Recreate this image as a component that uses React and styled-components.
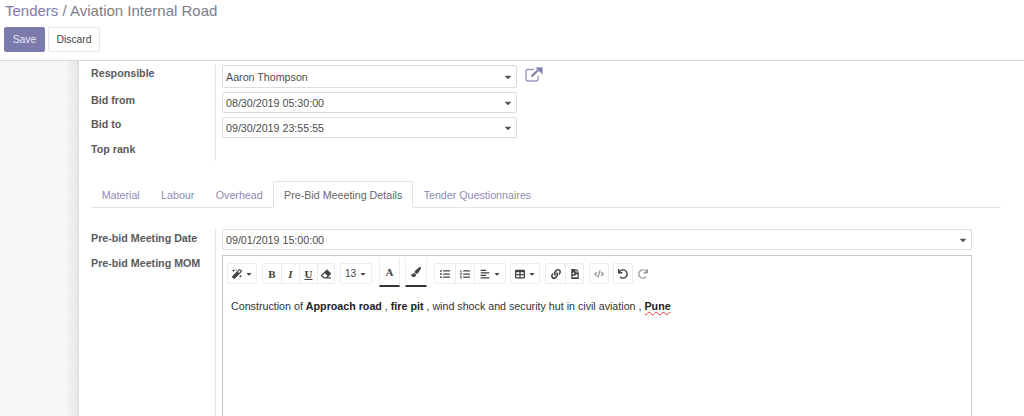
import React from "react";
import styled, { createGlobalStyle } from "styled-components";
import {
  FaMagic,
  FaEraser,
  FaPaintBrush,
  FaListUl,
  FaListOl,
  FaAlignLeft,
  FaTable,
  FaLink,
  FaFileImage,
  FaCode,
  FaUndo,
  FaRedo,
  FaCaretDown,
} from "react-icons/fa";

const GlobalStyle = createGlobalStyle`
  html, body {
    margin: 0;
    padding: 0;
    background: #fff;
    font-family: "Liberation Sans", Arial, sans-serif;
    color: #4c4c4c;
  }
`;

const Page = styled.div`
  width: 1024px;
  height: 416px;
  overflow: hidden;
  display: flex;
  flex-direction: column;
`;

const ControlPanel = styled.header`
  flex: 0 0 61px;
  box-sizing: border-box;
  border-bottom: 1px solid #d9d9d9;
  padding: 2px 0 0 5px;
`;

const Breadcrumb = styled.div`
  font-size: 15px;
  line-height: 17px;
  color: #8079a8;
  span {
    color: #7d7d8a;
  }
`;

const ButtonRow = styled.div`
  display: flex;
  gap: 3px;
  margin: 8px 0 0 -1px;
`;

const ActionButton = styled.button`
  height: 25px;
  box-sizing: border-box;
  padding: 0;
  width: ${(p) => p.$width}px;
  font: 10.4px "Liberation Sans", Arial, sans-serif;
  border-radius: 2px;
  border: 1px solid ${(p) => (p.$primary ? "#7c7bad" : "#e6e6e6")};
  background: ${(p) => (p.$primary ? "#7c7bad" : "#fff")};
  color: ${(p) => (p.$primary ? "#e8e8f2" : "#444")};
`;

const Body = styled.main`
  flex: 1;
  display: flex;
  min-height: 0;
`;

const Texture = styled.div`
  flex: 0 0 78px;
  background-color: #f6f6f6;
  background-image:
    linear-gradient(to right, transparent 66px, rgba(0, 0, 0, 0.07) 78px),
    repeating-conic-gradient(#f9f9f9 0 25%, #f2f2f2 0 50%);
  background-size: auto, 3px 3px;
`;

const Sheet = styled.section`
  flex: 0 0 936px;
  box-sizing: border-box;
  border-left: 1px solid #d8d8d8;
  padding: 4px 0 0 12px;
`;

const Group = styled.div`
  display: grid;
  grid-template-columns: 125px 1fr;
  width: ${(p) => p.$width}px;
`;

const Label = styled.label`
  box-sizing: border-box;
  border-right: 1px solid #e4e4e4;
  font-size: 10.7px;
  font-weight: bold;
  color: #5a5a5a;
  height: ${(p) => p.$height}px;
  padding-top: ${(p) => p.$top}px;
  line-height: 13px;
`;

const FieldCell = styled.div`
  display: flex;
  align-items: flex-start;
  gap: 8px;
  padding-left: 6px;
  min-width: 0;
`;

const SelectBox = styled.div`
  flex: 1;
  max-width: ${(p) => p.$max || 2000}px;
  box-sizing: border-box;
  height: ${(p) => p.$height}px;
  border: 1px solid #dcdcdc;
  border-radius: 2px;
  display: flex;
  align-items: center;
  justify-content: space-between;
  padding: 0 3px 0 3px;
  font-size: 10.7px;
  color: #4c4c4c;
  svg {
    font-size: 10px;
    color: #555;
  }
`;

const ExternalLink = () => (
  <svg width="18" height="15" viewBox="0 0 18 15" style={{ marginTop: 2 }}>
    <path
      d="M9 2.5H2.5a1.5 1.5 0 0 0-1.5 1.5v8.5a1.5 1.5 0 0 0 1.5 1.5h9a1.5 1.5 0 0 0 1.5-1.5V9"
      fill="none"
      stroke="#9a99c4"
      strokeWidth="1.4"
    />
    <path d="M6.5 9.5 13 3.2" fill="none" stroke="#7c7bad" strokeWidth="2.2" />
    <path d="M10.5 0.5H17.5V7.5Z" fill="#7c7bad" />
  </svg>
);

const TabBar = styled.nav`
  display: flex;
  width: 910px;
  height: 27px;
  margin-top: 20px;
  box-sizing: border-box;
  border-bottom: 1px solid #e4e4e4;
`;

const Tab = styled.div`
  box-sizing: border-box;
  height: 27px;
  padding: 7px 9.7px 0;
  font-size: 10.7px;
  line-height: 13px;
  white-space: nowrap;
  color: ${(p) => (p.$active ? "#666" : "#8f8ab4")};
  background: ${(p) => (p.$active ? "#fff" : "transparent")};
  border: 1px solid ${(p) => (p.$active ? "#e4e4e4" : "transparent")};
  border-bottom-color: ${(p) => (p.$active ? "#fff" : "transparent")};
`;

const Section = styled.div`
  margin-top: 21px;
`;

const Editor = styled.div`
  box-sizing: border-box;
  width: 750px;
  height: 170px;
  margin-left: 6px;
  border: 1px solid #c8c8c8;
  border-bottom: 0;
  padding: 7px 4px 0;
`;

const Toolbar = styled.div`
  display: flex;
  align-items: flex-start;
`;

const BtnGroup = styled.div`
  display: flex;
  height: 21px;
  box-sizing: border-box;
  border: 1px solid ${(p) => (p.$plain ? "transparent" : "#ececec")};
  border-radius: 2px;
  margin-left: ${(p) => p.$gap ?? 5}px;
`;

const ToolBtn = styled.div`
  box-sizing: border-box;
  width: ${(p) => p.$width || 19}px;
  display: flex;
  align-items: center;
  justify-content: center;
  gap: 3px;
  font: ${(p) => (p.$italic ? "italic " : "")}bold 11px "Liberation Serif", serif;
  text-decoration: ${(p) => (p.$underline ? "underline" : "none")};
  color: ${(p) => p.$color || "#444"};
  border-left: ${(p) => (p.$divider ? "1px solid #ececec" : "0")};
  svg {
    font-size: 10px;
  }
  svg.caret {
    font-size: 8px;
  }
`;

const SizeLabel = styled.span`
  font: 10px "Liberation Sans", Arial, sans-serif;
`;

const ColorBtn = styled.div`
  box-sizing: border-box;
  width: ${(p) => p.$width}px;
  height: 29px;
  margin: -5px 0 0 ${(p) => p.$gap}px;
  display: flex;
  align-items: center;
  justify-content: center;
  border-left: 1px solid #ececec;
  border-right: 1px solid #ececec;
  border-bottom: 2px solid #333;
  font: bold 11px "Liberation Serif", serif;
  color: #444;
  svg {
    font-size: 10px;
  }
`;

const EditorText = styled.p`
  margin: 12px 0 0 4px;
  font-size: 10.7px;
  line-height: 14px;
  color: #333;
  b {
    color: #222;
  }
`;

const Misspelled = styled.b`
  text-decoration: underline wavy #e53935 1px;
  text-underline-offset: 1px;
`;

const Caret = () => <FaCaretDown className="caret" />;

export default function App() {
  return (
    <>
      <GlobalStyle />
      <Page>
        <ControlPanel>
          <Breadcrumb>
            Tenders <span>/ Aviation Internal Road</span>
          </Breadcrumb>
          <ButtonRow>
            <ActionButton $primary $width={41}>Save</ActionButton>
            <ActionButton $width={52}>Discard</ActionButton>
          </ButtonRow>
        </ControlPanel>
        <Body>
          <Texture />
          <Sheet>
            <Group $width={500}>
              <Label $height={27} $top={2}>Responsible</Label>
              <FieldCell>
                <SelectBox $height={23} $max={295}>
                  Aaron Thompson <FaCaretDown />
                </SelectBox>
                <ExternalLink />
              </FieldCell>
              <Label $height={25} $top={2}>Bid from</Label>
              <FieldCell>
                <SelectBox $height={21} $max={295}>
                  08/30/2019 05:30:00 <FaCaretDown />
                </SelectBox>
              </FieldCell>
              <Label $height={25} $top={1}>Bid to</Label>
              <FieldCell>
                <SelectBox $height={21} $max={295}>
                  09/30/2019 23:55:55 <FaCaretDown />
                </SelectBox>
              </FieldCell>
              <Label $height={19} $top={1}>Top rank</Label>
              <FieldCell />
            </Group>

            <TabBar>
              <Tab>Material</Tab>
              <Tab>Labour</Tab>
              <Tab>Overhead</Tab>
              <Tab $active>Pre-Bid Meeeting Details</Tab>
              <Tab>Tender Questionnaires</Tab>
            </TabBar>

            <Section>
              <Group $width={880}>
                <Label $height={26} $top={3}>Pre-bid Meeting Date</Label>
                <FieldCell>
                  <SelectBox $height={21} $max={750}>
                    09/01/2019 15:00:00 <FaCaretDown />
                  </SelectBox>
                </FieldCell>
                <Label $height={170} $top={2}>Pre-bid Meeting MOM</Label>
                <Editor>
                  <Toolbar>
                    <BtnGroup $gap={0}>
                      <ToolBtn $width={28}><FaMagic /><Caret /></ToolBtn>
                    </BtnGroup>
                    <BtnGroup>
                      <ToolBtn $width={18}>B</ToolBtn>
                      <ToolBtn $width={18} $divider $italic>I</ToolBtn>
                      <ToolBtn $width={18} $divider $underline>U</ToolBtn>
                      <ToolBtn $width={17} $divider><FaEraser /></ToolBtn>
                    </BtnGroup>
                    <BtnGroup>
                      <ToolBtn $width={30}><SizeLabel>13</SizeLabel><Caret /></ToolBtn>
                    </BtnGroup>
                    <ColorBtn $width={21} $gap={7}>A</ColorBtn>
                    <ColorBtn $width={22} $gap={5}><FaPaintBrush /></ColorBtn>
                    <BtnGroup $gap={7}>
                      <ToolBtn $width={20}><FaListUl /></ToolBtn>
                      <ToolBtn $width={19} $divider><FaListOl /></ToolBtn>
                      <ToolBtn $width={31} $divider><FaAlignLeft /><Caret /></ToolBtn>
                    </BtnGroup>
                    <BtnGroup $gap={4}>
                      <ToolBtn $width={28}><FaTable /><Caret /></ToolBtn>
                    </BtnGroup>
                    <BtnGroup>
                      <ToolBtn $width={19}><FaLink /></ToolBtn>
                      <ToolBtn $width={18} $divider><FaFileImage /></ToolBtn>
                    </BtnGroup>
                    <BtnGroup>
                      <ToolBtn $width={18} $color="#999"><FaCode /></ToolBtn>
                    </BtnGroup>
                    <BtnGroup $gap={4}>
                      <ToolBtn $width={18}><FaUndo /></ToolBtn>
                    </BtnGroup>
                    <BtnGroup $gap={0} $plain>
                      <ToolBtn $width={18} $color="#999"><FaRedo /></ToolBtn>
                    </BtnGroup>
                  </Toolbar>
                  <EditorText>
                    Construction of <b>Approach road</b> , <b>fire pit</b> , wind
                    shock and security hut in civil aviation ,{" "}
                    <Misspelled>Pune</Misspelled>
                  </EditorText>
                </Editor>
              </Group>
            </Section>
          </Sheet>
        </Body>
      </Page>
    </>
  );
}
